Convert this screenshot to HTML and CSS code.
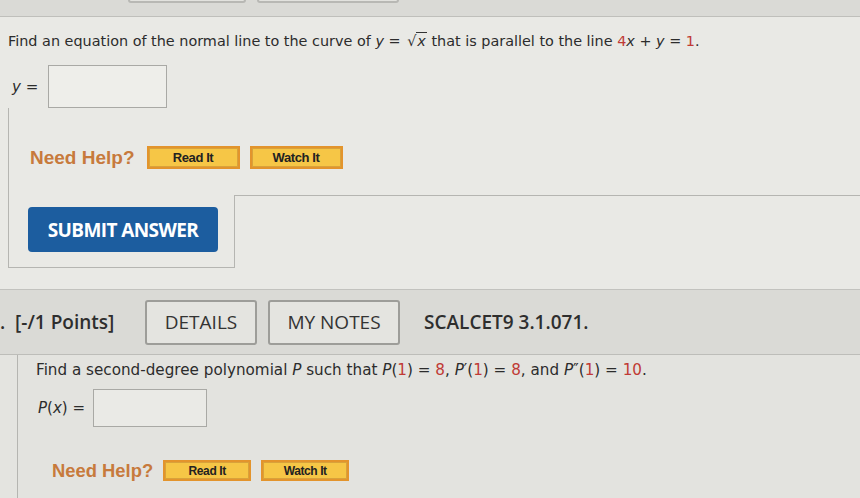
FILE: index.html
```html
<!DOCTYPE html>
<html>
<head>
<meta charset="utf-8">
<link rel="stylesheet" href="styles.css">
</head>
<body>
<div class="topstrip"><span class="tab tab1"></span><span class="tab tab2"></span></div>
<section class="q1">
  <p class="prompt">Find an equation of the normal line to the curve of <i>y</i> = <span class="sqrt">√<span class="rad"><i>x</i></span></span> that is parallel to the line <span class="red">4</span><i>x</i> + <i>y</i> = <span class="red">1</span>.</p>
  <div class="ans"><span class="lbl"><i>y</i> =</span><span class="box"></span></div>
  <div class="lower">
    <div class="help"><span class="need">Need Help?</span><span class="hbtn">Read It</span><span class="hbtn">Watch It</span></div>
    <div class="subrow">
      <div class="subcell"><button class="submit">SUBMIT ANSWER</button></div>
      <div class="fill"></div>
    </div>
  </div>
</section>
<section class="hdr">
  <span class="pts">.&nbsp;&nbsp;[-/1 Points]</span>
  <span class="hdrbtn btn-details">DETAILS</span>
  <span class="hdrbtn btn-notes">MY NOTES</span>
  <span class="code">SCALCET9 3.1.071.</span>
</section>
<section class="q2">
  <p class="prompt2">Find a second-degree polynomial <i>P</i> such that <i>P</i>(<span class="red">1</span>) = <span class="red">8</span>, <i>P</i>′(<span class="red">1</span>) = <span class="red">8</span>, and <i>P</i>″(<span class="red">1</span>) = <span class="red">10</span>.</p>
  <div class="ans2"><span class="lbl2"><i>P</i>(<i>x</i>) =</span><span class="box2"></span></div>
  <div class="help2"><span class="need need2">Need Help?</span><span class="hbtn sm">Read It</span><span class="hbtn sm">Watch It</span></div>
</section>
</body>
</html>
```
FILE: styles.css
```css
html, body { margin: 0; padding: 0; }
body {
  width: 860px; height: 498px; overflow: hidden;
  background: #e4e4e0;
  font-family: "DejaVu Sans", Verdana, sans-serif;
  color: #2c2c2c;
}
.topstrip {
  height: 16px; background: #dadad6; border-bottom: 1px solid #bfbfbb;
  display: flex; align-items: flex-end; overflow: hidden;
}
.tab { display: block; height: 30px; margin-bottom: 13px; border: 2px solid #b8b8b4; border-radius: 3px; background: #e2e2de; box-sizing: border-box; }
.tab1 { width: 118px; margin-left: 128px; }
.tab2 { width: 142px; margin-left: 11px; }

.q1 { background: #e9e9e5; height: 272px; border-bottom: 1px solid #c2c2be; }
.prompt { margin: 0; padding: 14px 0 0 8px; font-size: 14.4px; line-height: 20px; white-space: nowrap; }
.red { color: #c03a35; }
.sqrt { margin-left: 2px; }
.rad { border-top: 1px solid #333; padding: 0 1px; }
.ans { display: flex; align-items: center; margin-top: 14px; padding-left: 12px; }
.lbl { font-size: 15px; width: 36px; }
.box { width: 117px; height: 41px; border: 1px solid #a9a9a5; background: #eeeeea; }

.lower { margin: 0 0 0 8px; border-left: 1px solid #b5b5b1; padding-top: 38px; }
.help { display: flex; align-items: center; padding-left: 21px; height: 23px; }
.need { font-family: "Liberation Sans", Arial, sans-serif; font-weight: bold; font-size: 19px; color: #c77a3c; margin-right: 12px; }
.need2 { font-size: 18.4px; margin-right: 10px; }
.hbtn {
  display: flex; align-items: center; justify-content: center;
  width: 93px; height: 23px; box-sizing: border-box; margin-right: 10px;
  background: #f6c646; border: 2px solid #e3942c; box-shadow: inset 0 0 0 1px #d9a23a;
  font-family: "Liberation Sans", Arial, sans-serif; font-weight: bold; font-size: 13px; color: #222; letter-spacing: -0.4px;
}
.subrow { display: flex; margin-top: 26px; }
.subcell { width: 226px; box-sizing: border-box; padding: 12px 0 15px 19px; border-right: 1px solid #b5b5b1; border-bottom: 1px solid #b5b5b1; }
.submit {
  display: block; width: 190px; height: 45px; border: 0; border-radius: 4px;
  background: #1c5d9f; color: #fff; padding: 0;
  font-family: "Open Sans", sans-serif; font-weight: 700; font-size: 19px; letter-spacing: -0.6px;
}
.fill { flex: 1; border-top: 1px solid #b5b5b1; }

.hdr { height: 64px; background: #dadad6; border-bottom: 1px solid #bdbdb9; display: flex; align-items: center; font-family: "Open Sans", sans-serif; }
.pts { font-weight: 600; font-size: 19px; width: 145px; color: #2e2e2e; white-space: nowrap; }
.hdrbtn { display: flex; align-items: center; justify-content: center; height: 45px; box-sizing: border-box; border: 2px solid #9d9d99; border-radius: 3px; background: #e4e4e0; font-size: 19px; color: #333; margin-right: 11px; }
.btn-details { width: 112px; }
.btn-notes { width: 132px; margin-right: 24px; }
.code { font-weight: 600; font-size: 19px; color: #2e2e2e; }

.q2 { margin-left: 17px; border-left: 1px solid #b5b5b1; padding-left: 18px; height: 143px; background: #e3e3df; }
.prompt2 { margin: 0; padding-top: 5px; font-size: 15.2px; line-height: 20px; white-space: nowrap; }
.ans2 { display: flex; align-items: center; margin-top: 9px; padding-left: 2px; }
.lbl2 { font-size: 15px; width: 55px; }
.box2 { width: 112px; height: 36px; border: 1px solid #a9a9a5; background: #eaeae6; }
.help2 { display: flex; align-items: center; padding-left: 16px; margin-top: 33px; height: 21px; }
.hbtn.sm { width: 88px; height: 21px; font-size: 12px; }
```
